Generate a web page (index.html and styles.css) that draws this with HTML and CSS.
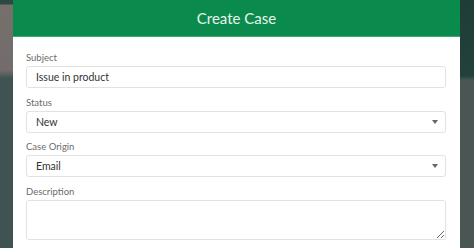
FILE: index.html
```html
<!DOCTYPE html>
<html lang="en">
<head>
  <meta charset="UTF-8">
  <title>Create Case</title>
  <link rel="stylesheet" href="styles.css">
</head>
<body>

  <div class="page">
    <div class="backdrop backdrop-left"></div>

    <div class="modal">
      <div class="modal-header">
        <h2>Create Case</h2>
      </div>

      <form class="modal-body">
        <div class="field">
          <label for="subject">Subject</label>
          <input id="subject" class="input" type="text" value="Issue in product">
        </div>

        <div class="field">
          <label for="status">Status</label>
          <div class="select">
            <span>New</span>
            <i class="caret"></i>
          </div>
        </div>

        <div class="field">
          <label for="origin">Case Origin</label>
          <div class="select">
            <span>Email</span>
            <i class="caret"></i>
          </div>
        </div>

        <div class="field">
          <label for="description">Description</label>
          <textarea id="description" class="textarea"></textarea>
        </div>
      </form>
    </div>

    <div class="backdrop backdrop-right"></div>
  </div>

</body>
</html>
```

FILE: styles.css
```css
html, body {
  height: 100%;
  margin: 0;
  padding: 0;
  overflow: hidden;
  font-family: Lato, "Open Sans", Arial, sans-serif;
  background: #3f5452;
}

.page {
  display: flex;
  height: 248px;
}

.backdrop {
  height: 100%;
}

.backdrop-left {
  width: 13px;
  background: linear-gradient(to bottom, #2e4843 0, #2e4843 4px, #76706d 5px, #726d6a 70px, #3f5452 78px, #3f5452 100%);
}

.backdrop-right {
  width: 14px;
  background: linear-gradient(to bottom, #1f3d37 0, #21413a 76px, #495654 80px, #495654 100%);
}

.modal {
  flex: 1;
  background: white;
  display: flex;
  flex-direction: column;
}

.modal-header {
  height: 37px;
  background: #0b8a4e;
  border-bottom: 1px solid #3fa873;
  display: flex;
  align-items: center;
  justify-content: center;
}

.modal-header h2 {
  margin: 0;
  font-size: 15px;
  font-weight: normal;
  color: #e6f6ec;
}

.modal-body {
  padding: 15px 14px 0 13px;
}

.field {
  margin-bottom: 8.5px;
}

.field label {
  display: block;
  font-size: 9.5px;
  line-height: 12px;
  color: #6b6b6b;
  margin-bottom: 2px;
}

.input,
.select,
.textarea {
  box-sizing: border-box;
  width: 100%;
  border: 1px solid #e2e2e2;
  border-radius: 3px;
  background: white;
  font-family: inherit;
  font-size: 10.5px;
  color: #333;
}

.input {
  display: block;
  height: 22px;
  padding: 0 9px;
  outline: none;
}

.select {
  height: 22px;
  padding: 0 7px 0 9px;
  display: flex;
  align-items: center;
  justify-content: space-between;
}

.caret {
  width: 0;
  height: 0;
  border-left: 3.5px solid transparent;
  border-right: 3.5px solid transparent;
  border-top: 4px solid #666;
}

.textarea {
  display: block;
  height: 40px;
  margin: 0;
  resize: vertical;
}
```
